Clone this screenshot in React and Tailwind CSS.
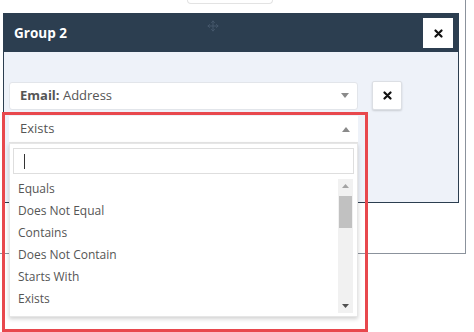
import { Move } from "lucide-react";

const options = [
  "Equals",
  "Does Not Equal",
  "Contains",
  "Does Not Contain",
  "Starts With",
  "Exists",
];

const CloseIcon = () => (
  <svg width="9" height="9" viewBox="0 0 9 9">
    <path d="M1.5 1.5 L7.5 7.5 M7.5 1.5 L1.5 7.5" stroke="#111" strokeWidth="2.2" strokeLinecap="round" />
  </svg>
);

const Caret = ({ up }) => (
  <svg width="8" height="5" viewBox="0 0 8 5">
    <path d={up ? "M0 5 L4 0 L8 5 Z" : "M0 0 L8 0 L4 5 Z"} fill="#8a8a8a" />
  </svg>
);

const App = () => {
  return (
    <div
      className="relative w-[474px] h-[332px] bg-white overflow-hidden text-[#555]"
      style={{ fontFamily: '"Open Sans", "Noto Sans", sans-serif' }}
    >
      <div className="w-[466px] h-[254px] border-r border-b border-[#8b929c] pl-[3px]">
        <div className="ml-[184px] w-[86px] h-[4px] border border-t-0 border-[#e3e3e3] rounded-b" />

        {/* Group panel */}
        <div className="mt-[9px] w-[456px] h-[190px] border border-[#2c3e50] flex flex-col">
          <div className="relative h-[38px] bg-[#2c3e50] flex items-center justify-between pl-[10px] pr-[5px]">
            <span className="text-white font-bold text-[13.5px]">Group 2</span>
            <Move
              size={12}
              strokeWidth={2}
              className="absolute left-[203px] top-[6px] text-[#45576b]"
            />
            <button className="w-[30px] h-[30px] bg-white flex items-center justify-center">
              <CloseIcon />
            </button>
          </div>

          <div className="flex-1 bg-[#eef2f9] pl-[5px] pt-[29px]">
            <div className="flex items-center gap-[14px]">
              <div className="w-[349px] h-[28px] bg-white border border-[#e2e5ea] rounded-[3px] flex items-center justify-between pl-[10px] pr-[8px] text-[13px]">
                <span>
                  <span className="font-bold">Email:</span> Address
                </span>
                <Caret />
              </div>
              <button className="w-[30px] h-[29px] bg-white border border-[#dcdfe4] rounded-[2px] shadow-[0_1px_2px_rgba(0,0,0,0.15)] flex items-center justify-center">
                <CloseIcon />
              </button>
            </div>

            {/* Open operator select */}
            <div className="relative mt-[6px] w-[349px]">
              <div className="h-[27px] bg-white border-b border-[#e6e6e6] flex items-center justify-between pl-[11px] pr-[8px] text-[13px]">
                <span>Exists</span>
                <Caret up />
              </div>
              <div className="absolute left-0 top-[27px] w-[349px] h-[174px] bg-white border border-[#e6e6e6] shadow-[0_2px_4px_rgba(0,0,0,0.18)] z-10">
                <div className="mx-[3px] mt-[4px] h-[26px] border border-[#dedede] flex items-center pl-[10px]">
                  <span className="w-px h-[15px] bg-[#333]" />
                </div>
                <div className="flex mt-[4px]">
                  <ul className="flex-1 text-[12px]">
                    {options.map((opt) => (
                      <li key={opt} className="h-[22px] flex items-center pl-[8px]">
                        {opt}
                      </li>
                    ))}
                  </ul>
                  <div className="w-[15px] h-[134px] mr-[4px] mt-px bg-[#f1f1f1] flex flex-col items-center">
                    <div className="h-[14px] flex items-center">
                      <svg width="7" height="4" viewBox="0 0 7 4">
                        <path d="M0 4 L3.5 0 L7 4 Z" fill="#a3a3a3" />
                      </svg>
                    </div>
                    <div className="w-[13px] h-[32px] bg-[#c1c1c1] mt-[3px]" />
                    <div className="flex-1" />
                    <div className="h-[14px] flex items-center">
                      <svg width="7" height="4" viewBox="0 0 7 4">
                        <path d="M0 0 L7 0 L3.5 4 Z" fill="#505050" />
                      </svg>
                    </div>
                  </div>
                </div>
              </div>
            </div>
          </div>
        </div>
      </div>

      {/* highlight annotation */}
      <div className="absolute left-[2px] top-[112px] w-[366px] h-[220px] border-[3px] border-[#e8484d] pointer-events-none z-20" />
    </div>
  );
};

export default App;
